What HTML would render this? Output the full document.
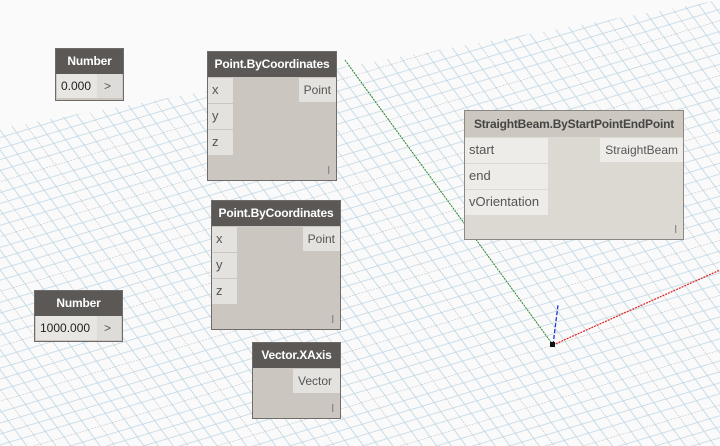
<!DOCTYPE html>
<html><head><meta charset="utf-8"><style>
body{margin:0;width:720px;height:446px;overflow:hidden;background:#fafafa;position:relative;font-family:"Liberation Sans",sans-serif;}
.n{position:absolute;background:#cbc7c0;border:1px solid #6f6c69;box-sizing:border-box}
.h{position:absolute;left:0;right:0;top:0;height:25px;background:#5b5856;color:#fff;font-weight:bold;font-size:12px;text-align:center;line-height:25px;white-space:nowrap;letter-spacing:-0.2px}
.p{position:absolute;left:0;width:25px;height:25px;background:#e4e2de;color:#555;font-size:13px;line-height:24px;padding-left:4px;box-sizing:border-box}
.o{position:absolute;right:0;height:24px;background:#e4e2de;color:#555;font-size:12px;line-height:24px;padding:0 5px;box-sizing:border-box}
.l{position:absolute;right:6px;bottom:3px;color:#777;font-size:11px}
.v{position:absolute;height:24px;top:25px;background:#e8e6e2;color:#222;font-size:12px;line-height:24px;box-sizing:border-box}
</style></head><body>
<svg width="720" height="446" style="position:absolute;left:0;top:0">
<defs>
<pattern id="g" width="60" height="60" patternUnits="userSpaceOnUse" patternTransform="matrix(1 -0.3 0.55 0.75 553 345)">
<path d="M12 0V60M24 0V60M36 0V60M48 0V60M0 12H60M0 24H60M0 36H60M0 48H60" stroke="#bcd3e2" stroke-width="0.8" fill="none"/>
<path d="M0 0V60M0 0H60" stroke="#9aa6b0" stroke-width="0.8" stroke-dasharray="2 1" fill="none"/>
</pattern>
<clipPath id="c"><polygon points="0,128 720,0 720,446 0,446"/></clipPath>
</defs>
<rect width="720" height="446" fill="url(#g)" clip-path="url(#c)"/>
<path d="M345 60L553 345" stroke="#2a8a2a" stroke-width="1" stroke-dasharray="2 1"/>
<path d="M553 345L720 270" stroke="#e02020" stroke-width="1.2" stroke-dasharray="2 1"/>
<path d="M553 345L558 305" stroke="#2030d0" stroke-width="1.3" stroke-dasharray="4 2"/>
<rect x="550" y="342" width="5" height="5" fill="#111"/>
</svg>

<div class="n" style="left:55px;top:48px;width:69px;height:53px"><div class="h">Number</div><div class="v" style="left:1px;width:40px;padding-left:4px">0.000</div><div class="v" style="left:41px;width:25px;background:#dedcd8;color:#555;padding-left:7px">&gt;</div></div>

<div class="n" style="left:207px;top:51px;width:130px;height:130px"><div class="h">Point.ByCoordinates</div>
<div class="p" style="top:26px">x</div><div class="p" style="top:52px">y</div><div class="p" style="top:78px">z</div>
<div class="o" style="top:26px">Point</div><div class="l">l</div></div>

<div class="n" style="left:211px;top:200px;width:130px;height:130px"><div class="h">Point.ByCoordinates</div>
<div class="p" style="top:26px">x</div><div class="p" style="top:52px">y</div><div class="p" style="top:78px">z</div>
<div class="o" style="top:26px">Point</div><div class="l">l</div></div>

<div class="n" style="left:34px;top:290px;width:89px;height:52px"><div class="h">Number</div><div class="v" style="left:1px;width:61px;padding-left:4px">1000.000</div><div class="v" style="left:62px;width:24px;background:#dedcd8;color:#555;padding-left:7px">&gt;</div></div>

<div class="n" style="left:252px;top:342px;width:89px;height:77px"><div class="h">Vector.XAxis</div>
<div class="o" style="top:26px;width:47px">Vector</div><div class="l">l</div></div>

<div class="n" style="left:464px;top:110px;width:220px;height:130px;background:#dcd9d3;border-color:#8a8784"><div class="h" style="background:#cdc8bf;color:#444;height:26px;line-height:26px">StraightBeam.ByStartPointEndPoint</div>
<div class="p" style="top:27px;width:83px;background:#eeece9">start</div><div class="p" style="top:53px;width:83px;background:#eeece9">end</div><div class="p" style="top:79px;width:83px;background:#eeece9">vOrientation</div>
<div class="o" style="top:27px;background:#eeece9">StraightBeam</div><div class="l">l</div></div>
</body></html>
